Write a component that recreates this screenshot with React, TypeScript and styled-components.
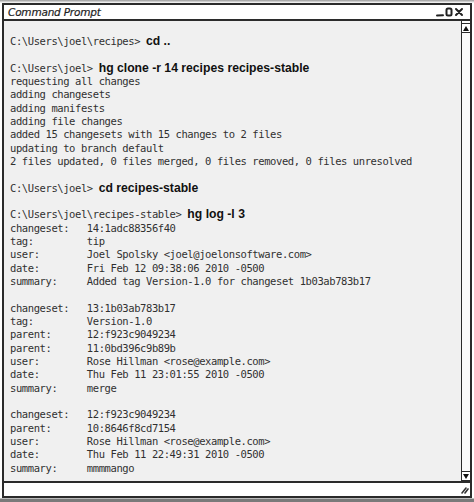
import React from "react";
import styled, { createGlobalStyle } from "styled-components";

const Global = createGlobalStyle`
  html, body { margin: 0; padding: 0; }
  body {
    width: 474px;
    height: 502px;
    overflow: hidden;
    background: linear-gradient(to bottom, #9a9a9a 0px, #ffffff 3px, #ffffff 498px, #7a7a7a 499px);
  }
`;

const Window = styled.div`
  box-sizing: border-box;
  margin: 3px 0 0 2px;
  width: 470px;
  height: 495px;
  border: 2px solid #2b2b2b;
  background: #ffffff;
  display: flex;
  flex-direction: column;
`;

const TitleBar = styled.div`
  height: 14px;
  border-bottom: 2px solid #2b2b2b;
  display: flex;
  align-items: center;
  justify-content: space-between;
  padding: 0 4px 0 4px;
  background: #ffffff;
`;

const Title = styled.span`
  font-family: "DejaVu Sans", sans-serif;
  font-style: italic;
  font-size: 10.5px;
  color: #1e1e1e;
  letter-spacing: -0.2px;
  -webkit-text-stroke: 0.2px #1e1e1e;
`;

const Controls = styled.div`
  display: flex;
  align-items: center;
  gap: 2px;
`;

const Body = styled.div`
  flex: 1;
  display: flex;
  border-bottom: 2px solid #2b2b2b;
  min-height: 0;
`;

const Console = styled.div`
  flex: 1;
  background: #f0f0f0;
  padding: 14px 0 0 6px;
  overflow: hidden;
`;

const Line = styled.div`
  height: 13.34px;
  line-height: 13.34px;
  white-space: pre;
  font-family: "DejaVu Sans Mono", monospace;
  font-size: 10.5px;
  letter-spacing: -0.41px;
  color: #303030;
`;

const Cmd = styled.span`
  font-family: "Liberation Sans", Arial, sans-serif;
  font-weight: bold;
  font-size: 12.2px;
  letter-spacing: 0;
  color: #111111;
`;

const Scrollbar = styled.div`
  width: 8px;
  border-left: 1px solid #2b2b2b;
  background: #fbfbfb;
  display: flex;
  flex-direction: column;
  justify-content: space-between;
  padding: 2px 0 0 0;
`;

const ArrowBox = styled.div`
  height: 8px;
  border-top: 1px solid #2b2b2b;
  border-bottom: 1px solid #2b2b2b;
  display: flex;
  align-items: center;
  justify-content: center;
  background: #ffffff;
`;

const StatusBar = styled.div`
  height: 13px;
  display: flex;
  justify-content: flex-end;
  align-items: center;
  padding-right: 1px;
  background: #ffffff;
`;

const Arrow = ({ up }: { up?: boolean }) => (
  <svg width="6" height="5" viewBox="0 0 6 5">
    {up ? (
      <polygon points="3,0 6,5 0,5" fill="#111" />
    ) : (
      <polygon points="0,0 6,0 3,5" fill="#111" />
    )}
  </svg>
);

type L = { t?: string; c?: string };

const lines: L[] = [
  { t: "C:\\Users\\joel\\recipes> ", c: "cd .." },
  {},
  { t: "C:\\Users\\joel> ", c: "hg clone -r 14 recipes recipes-stable" },
  { t: "requesting all changes" },
  { t: "adding changesets" },
  { t: "adding manifests" },
  { t: "adding file changes" },
  { t: "added 15 changesets with 15 changes to 2 files" },
  { t: "updating to branch default" },
  { t: "2 files updated, 0 files merged, 0 files removed, 0 files unresolved" },
  {},
  { t: "C:\\Users\\joel> ", c: "cd recipes-stable" },
  {},
  { t: "C:\\Users\\joel\\recipes-stable> ", c: "hg log -l 3" },
  { t: "changeset:   14:1adc88356f40" },
  { t: "tag:         tip" },
  { t: "user:        Joel Spolsky <joel@joelonsoftware.com>" },
  { t: "date:        Fri Feb 12 09:38:06 2010 -0500" },
  { t: "summary:     Added tag Version-1.0 for changeset 1b03ab783b17" },
  {},
  { t: "changeset:   13:1b03ab783b17" },
  { t: "tag:         Version-1.0" },
  { t: "parent:      12:f923c9049234" },
  { t: "parent:      11:0bd396c9b89b" },
  { t: "user:        Rose Hillman <rose@example.com>" },
  { t: "date:        Thu Feb 11 23:01:55 2010 -0500" },
  { t: "summary:     merge" },
  {},
  { t: "changeset:   12:f923c9049234" },
  { t: "parent:      10:8646f8cd7154" },
  { t: "user:        Rose Hillman <rose@example.com>" },
  { t: "date:        Thu Feb 11 22:49:31 2010 -0500" },
  { t: "summary:     mmmmango" },
];

export default function App() {
  return (
    <>
      <Global />
      <Window>
        <TitleBar>
          <Title>Command Prompt</Title>
          <Controls>
            <svg width="30" height="10" viewBox="0 0 30 10">
              <path d="M1 8.5 L7 8.2" stroke="#222" strokeWidth="2" strokeLinecap="round" />
              <rect x="10.5" y="1.5" width="5" height="7" rx="1.5" fill="none" stroke="#222" strokeWidth="2" />
              <path d="M20 2 L26 8 M26 2 L20 8" stroke="#222" strokeWidth="2" strokeLinecap="round" />
            </svg>
          </Controls>
        </TitleBar>
        <Body>
          <Console>
            {lines.map((l, i) => (
              <Line key={i}>
                {l.t ?? ""}
                {l.c ? <Cmd>{l.c}</Cmd> : null}
              </Line>
            ))}
          </Console>
          <Scrollbar>
            <ArrowBox>
              <Arrow up />
            </ArrowBox>
            <ArrowBox>
              <Arrow />
            </ArrowBox>
          </Scrollbar>
        </Body>
        <StatusBar>
          <svg width="8" height="8" viewBox="0 0 8 8">
            <path d="M1 7 L5 2 M4 7 L7 3" stroke="#333" strokeWidth="1.6" strokeLinecap="round" />
          </svg>
        </StatusBar>
      </Window>
    </>
  );
}
